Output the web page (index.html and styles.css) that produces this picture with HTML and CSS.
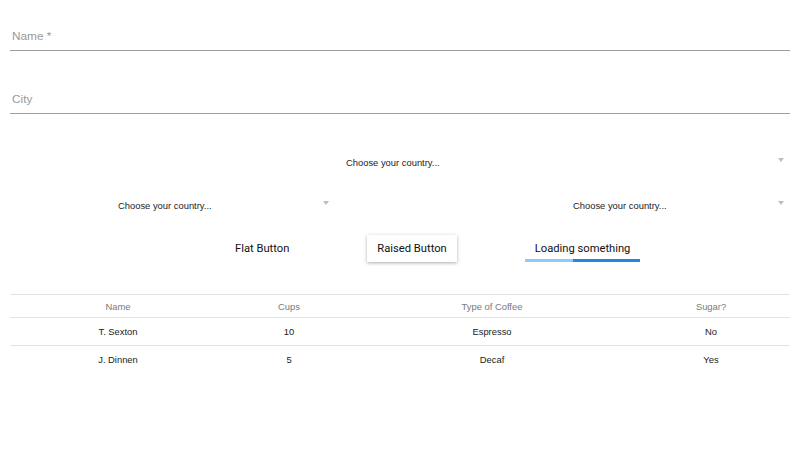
FILE: index.html
```html
<!DOCTYPE html>
<html>
<head>
<meta charset="utf-8">
<link rel="stylesheet" href="styles.css">
</head>
<body>
<div class="page">
  <div class="field first"><span class="label">Name *</span></div>
  <div class="field second"><span class="label">City</span></div>

  <div class="select-row top">
    <div class="select wide"><span class="sel-text">Choose your country...</span><span class="arrow"></span></div>
  </div>
  <div class="select-row pair">
    <div class="select"><span class="sel-text">Choose your country...</span><span class="arrow"></span></div>
    <div class="select"><span class="sel-text">Choose your country...</span><span class="arrow"></span></div>
  </div>

  <div class="buttons">
    <div class="btn flat">Flat Button</div>
    <div class="btn raised">Raised Button</div>
    <div class="btn loading">Loading something
      <div class="progress"><div class="prog-light"></div><div class="prog-dark"></div></div>
    </div>
  </div>

  <table class="coffee">
    <colgroup><col class="c1"><col class="c2"><col class="c3"><col class="c4"></colgroup>
    <thead>
      <tr><th>Name</th><th>Cups</th><th>Type of Coffee</th><th>Sugar?</th></tr>
    </thead>
    <tbody>
      <tr class="bordered"><td>T. Sexton</td><td>10</td><td>Espresso</td><td>No</td></tr>
      <tr><td>J. Dinnen</td><td>5</td><td>Decaf</td><td>Yes</td></tr>
    </tbody>
  </table>
</div>
</body>
</html>
```
FILE: styles.css
```css
html, body { margin: 0; padding: 0; background: #fff; }
.page { padding: 0 10px; font-family: "Liberation Sans", Arial, sans-serif; }

.field {
  height: 48px;
  border-bottom: 1px solid #9e9e9e;
  display: flex;
  align-items: flex-end;
}
.field.first { margin-top: 2px; }
.field.second { margin-top: 14px; }
.label {
  font-family: "Liberation Sans", Arial, sans-serif;
  font-size: 11.8px;
  color: #9a9a9a;
  line-height: 16px;
  padding: 0 0 6px 2px;
}

.select-row { display: flex; }
.select-row.top { justify-content: flex-end; margin-top: 36px; }
.select-row.pair { justify-content: space-between; padding-left: 98px; margin-top: 19px; }
.select {
  width: 227px;
  height: 24px;
  display: flex;
  align-items: center;
  justify-content: space-between;
  padding: 0 6px 0 10px;
  box-sizing: border-box;
}
.select.wide { width: 454px; }
.sel-text { font-size: 9.4px; color: #222; }
.arrow {
  width: 0; height: 0;
  border-left: 3.5px solid transparent;
  border-right: 3.5px solid transparent;
  border-top: 4px solid #bdbdbd;
  margin-bottom: 4px;
}

.buttons {
  display: flex;
  gap: 68px;
  padding-left: 215px;
  margin-top: 18px;
}
.btn {
  font-family: Roboto, sans-serif;
  font-size: 11.2px;
  color: #111;
  height: 27px;
  line-height: 27px;
  padding: 0 10px;
  position: relative;
  white-space: nowrap;
}
.btn.raised {
  box-shadow: 0 1px 4px rgba(0,0,0,0.22), 0 1px 2px rgba(0,0,0,0.12);
  background: #fff;
}
.progress {
  position: absolute;
  left: 0; right: 0; bottom: 0;
  height: 3px;
  display: flex;
}
.prog-light { width: 48px; background: #90caf9; }
.prog-dark { flex: 1; background: #1e88e5; }

.coffee {
  width: 780px;
  margin-top: 32px;
  border-collapse: collapse;
  table-layout: fixed;
  border-top: 1px solid #e3e3e3;
  font-family: "Liberation Sans", Arial, sans-serif;
}
.c1 { width: 216px; } .c2 { width: 126px; } .c3 { width: 280px; } .c4 { width: 158px; }
.coffee th {
  font-weight: normal;
  font-size: 9.4px;
  color: #7a7a7a;
  height: 22px;
  padding: 0;
  border-bottom: 1px solid #e3e3e3;
}
.coffee td {
  font-size: 9.4px;
  color: #222;
  height: 27px;
  padding: 0;
  text-align: center;
}
.coffee tr.bordered td { border-bottom: 1px solid #e3e3e3; }
```
